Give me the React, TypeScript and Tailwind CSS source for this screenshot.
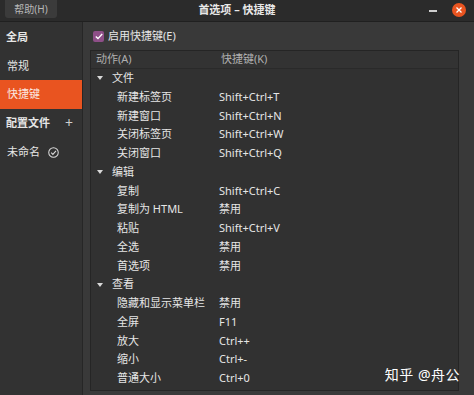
import React from "react";

type Row = { label: string; key?: string; group?: boolean };

const rows: Row[] = [
  { label: "文件", group: true },
  { label: "新建标签页", key: "Shift+Ctrl+T" },
  { label: "新建窗口", key: "Shift+Ctrl+N" },
  { label: "关闭标签页", key: "Shift+Ctrl+W" },
  { label: "关闭窗口", key: "Shift+Ctrl+Q" },
  { label: "编辑", group: true },
  { label: "复制", key: "Shift+Ctrl+C" },
  { label: "复制为 HTML", key: "禁用" },
  { label: "粘贴", key: "Shift+Ctrl+V" },
  { label: "全选", key: "禁用" },
  { label: "首选项", key: "禁用" },
  { label: "查看", group: true },
  { label: "隐藏和显示菜单栏", key: "禁用" },
  { label: "全屏", key: "F11" },
  { label: "放大", key: "Ctrl++" },
  { label: "缩小", key: "Ctrl+-" },
  { label: "普通大小", key: "Ctrl+0" },
];

const font = { fontFamily: '"Noto Sans", "Noto Sans CJK SC", sans-serif' };

function TreeRow({ row }: { row: Row }) {
  if (row.group) {
    return (
      <div className="flex h-[18.75px] items-center text-[11px] text-[#e6e6e6] whitespace-nowrap">
        <svg width="6" height="4" viewBox="0 0 6 4" className="ml-[6px] mr-[9px]">
          <path d="M0 0 L6 0 L3 4 Z" fill="#d8d8d8" />
        </svg>
        <span>{row.label}</span>
      </div>
    );
  }
  return (
    <div className="flex h-[18.75px] items-center text-[11px] text-[#e6e6e6] whitespace-nowrap">
      <span className="w-[128px] pl-[26px] shrink-0">{row.label}</span>
      <span>{row.key}</span>
    </div>
  );
}

export default function App() {
  return (
    <div className="w-[474px] h-[395px] bg-[#393939] flex flex-col overflow-hidden select-none" style={font}>
      {/* title bar */}
      <div className="relative h-[22px] bg-[#2b2b2b] border-b border-[#202020] flex items-center shrink-0">
        <div className="absolute left-[5px] top-0 w-[52px] h-[18px] bg-[#3b3b3b] rounded-b-[3px] flex items-center justify-center text-[10px] text-[#b8b8b8]">
          帮助(H)
        </div>
        <div className="flex-1 text-center text-[11px] font-bold text-[#e8e8e8]">首选项 – 快捷键</div>
        <div className="absolute left-[429px] top-[10px] w-[8px] h-[1.5px] bg-[#cfcfcf]" />
        <div className="absolute left-[452px] top-[3px] w-[14px] h-[14px] rounded-full bg-[#e95420] flex items-center justify-center">
          <svg width="6" height="6" viewBox="0 0 6 6">
            <path d="M0.5 0.5 L5.5 5.5 M5.5 0.5 L0.5 5.5" stroke="#fff" strokeWidth="1.3" />
          </svg>
        </div>
      </div>

      <div className="flex flex-1 min-h-0">
        {/* sidebar */}
        <div className="w-[83px] bg-[#323232] border-r border-[#262626] shrink-0 flex flex-col text-[11px] text-[#e6e6e6]">
          <div className="h-[29px] flex items-center pl-[6px] font-bold mt-[1px]">全局</div>
          <div className="h-[28px] flex items-center pl-[7px]">常规</div>
          <div className="h-[29px] flex items-center pl-[7px] bg-[#e95420] text-[#fbe9e2]">快捷键</div>
          <div className="h-[28px] flex items-center pl-[6px] pr-[9px] font-bold justify-between">
            <span>配置文件</span>
            <span className="text-[14px] font-normal text-[#cfcfcf] leading-none">+</span>
          </div>
          <div className="h-[30px] flex items-center pl-[7px] gap-[8px]">
            <span>未命名</span>
            <svg width="11" height="11" viewBox="0 0 12 12">
              <circle cx="6" cy="6" r="5.2" fill="none" stroke="#dcdcdc" strokeWidth="1.1" />
              <path d="M3.5 6.2 L5.3 8 L8.7 4.2" fill="none" stroke="#dcdcdc" strokeWidth="1.2" />
            </svg>
          </div>
        </div>

        {/* main */}
        <div className="flex-1 flex flex-col pl-[7px] pr-[15px] pb-[4px]">
          <div className="h-[28px] flex items-center gap-[4px] text-[11px] text-[#e6e6e6]">
            <div className="w-[11px] h-[11px] ml-[3px] rounded-[2px] bg-[#8e4f88] flex items-center justify-center">
              <svg width="8" height="7" viewBox="0 0 8 7">
                <path d="M0.8 3.4 L3 5.6 L7.2 1" fill="none" stroke="#fff" strokeWidth="1.4" />
              </svg>
            </div>
            <span>启用快捷键(E)</span>
          </div>
          <div className="flex-1 bg-[#313131] border border-[#252525] flex flex-col">
            <div className="h-[18px] flex items-center text-[11px] text-[#b0b0b0] border-b border-[#2a2a2a] bg-[#333333] whitespace-nowrap">
              <span className="w-[130px] pl-[5px]">动作(A)</span>
              <span>快捷键(K)</span>
            </div>
            <div>
              {rows.map((r, i) => (
                <TreeRow key={i} row={r} />
              ))}
            </div>
            <div className="relative flex-1">
              <div className="absolute right-[-2px] bottom-[5px] text-[14px] text-white tracking-[0.5px]">知乎 @舟公</div>
            </div>
          </div>
        </div>
      </div>
    </div>
  );
}
